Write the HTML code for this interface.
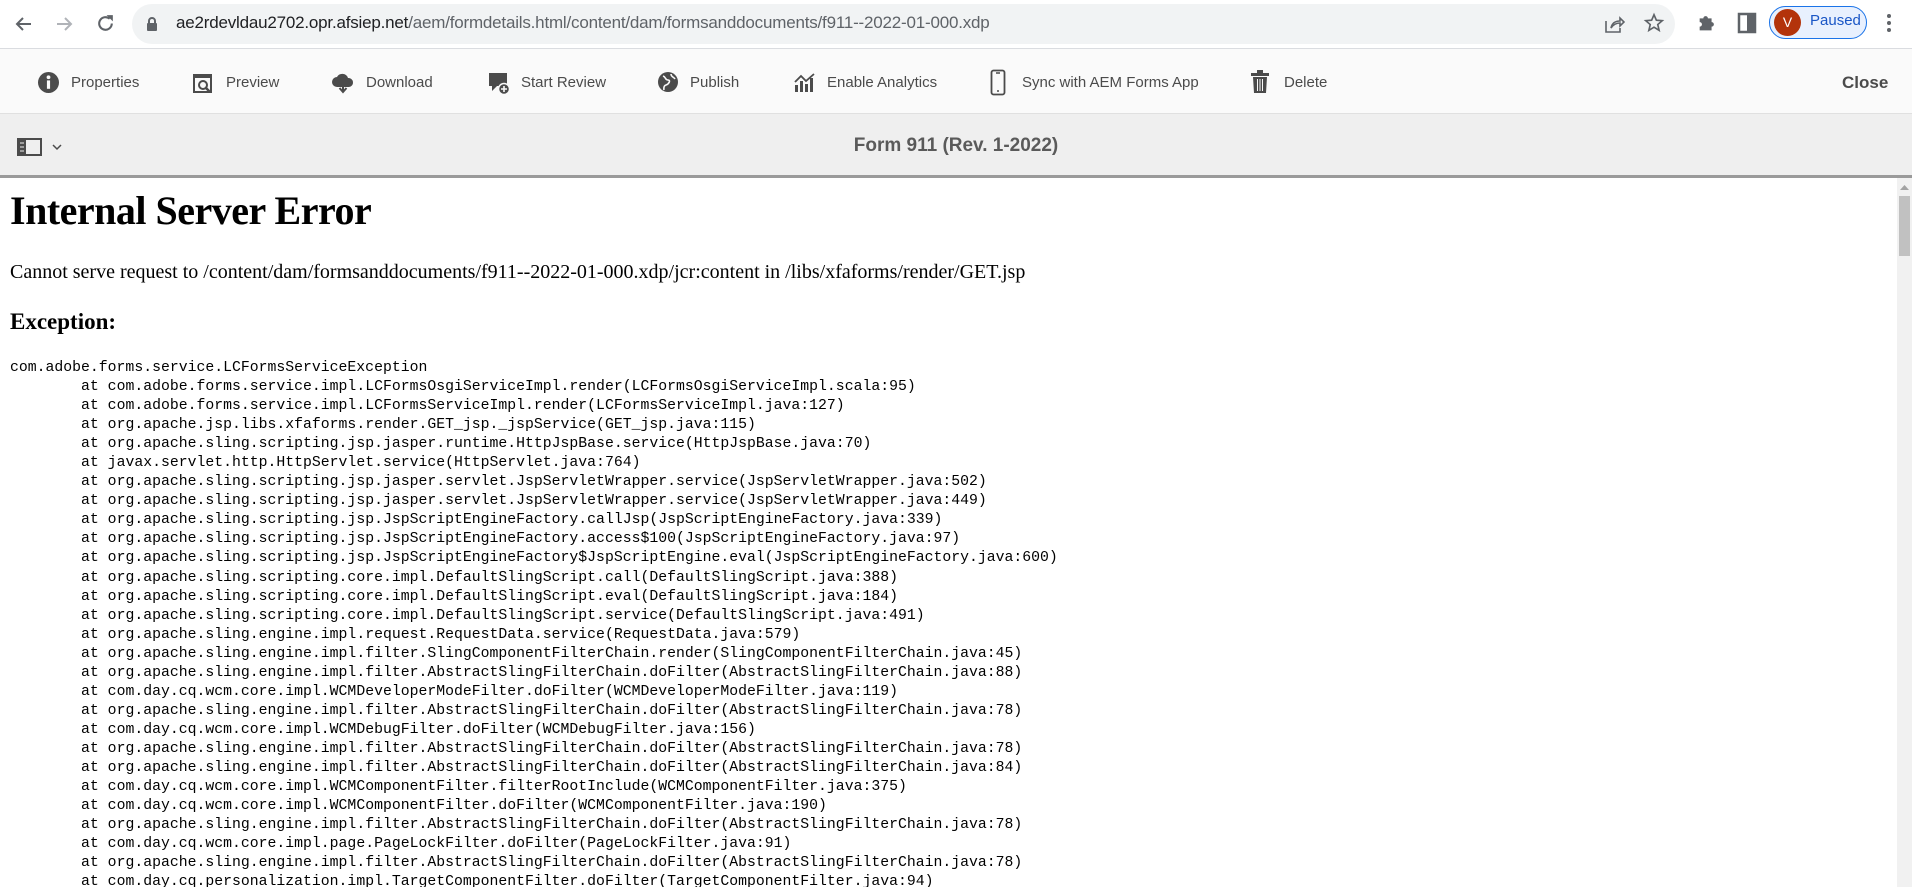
<!DOCTYPE html>
<html><head><meta charset="utf-8"><style>
*{margin:0;padding:0;box-sizing:border-box}
body{width:1912px;height:887px;overflow:hidden;background:#fff;position:relative;font-family:"Liberation Sans",sans-serif}
.chrome{position:absolute;left:0;top:0;width:1912px;height:49px;background:#fff;border-bottom:1px solid #dadce0}
.omni{position:absolute;left:132px;top:4px;width:1543px;height:40px;border-radius:20px;background:#f1f3f4}
.url{position:absolute;left:176px;top:13px;font-size:17px;color:#5f6368;white-space:nowrap;letter-spacing:-0.2px}
.url b{font-weight:normal;color:#202124}
.ico{position:absolute}
.abar{position:absolute;left:0;top:49px;width:1912px;height:65px;background:#fafafa;border-bottom:1px solid #e0e0e0}
.it{position:absolute;top:25px;font-size:15px;color:#4b4b4b;white-space:nowrap}
.tbar{position:absolute;left:0;top:114px;width:1912px;height:64px;background:#efefef;border-bottom:3px solid #9a9a9a}
.title{position:absolute;left:0;width:1912px;top:21px;text-align:center;font-size:19px;font-weight:bold;color:#5a5a5a}
.content{position:absolute;left:0;top:178px;width:1897px;height:709px;overflow:hidden;padding-left:10px;font-family:"Liberation Serif",serif;color:#000}
h1{font-size:40px;font-weight:bold;margin-top:10px;line-height:46px;letter-spacing:-0.5px}
p{font-size:20px;margin-top:26px;line-height:24px}
h3{font-size:23px;font-weight:bold;margin-top:24px;line-height:28px}
pre{font-family:"Liberation Mono",monospace;font-size:14.8px;line-height:19.05px;margin-top:23px;tab-size:8}
.sb{position:absolute;right:0;top:178px;width:15px;height:709px;background:#f1f1f1}
.thumb{position:absolute;right:2px;width:11px;height:60px;background:#c1c1c1}
</style></head><body>
<div class="chrome">
<svg class="ico" style="left:14px;top:14px" width="20" height="20" viewBox="0 0 20 20"><path d="M17 10H4M9 4L3 10l6 6" stroke="#5f6368" stroke-width="2" fill="none"/></svg>
<svg class="ico" style="left:54px;top:14px" width="20" height="20" viewBox="0 0 20 20"><path d="M3 10h13M11 4l6 6-6 6" stroke="#b0b3b8" stroke-width="2" fill="none"/></svg>
<svg class="ico" style="left:95px;top:13px" width="21" height="21" viewBox="0 0 20 20"><path d="M16 10a6 6 0 1 1-2-4.5" stroke="#5f6368" stroke-width="2" fill="none"/><path d="M11 2h6v6z" fill="#5f6368"/></svg>
<div class="omni"></div>
<svg class="ico" style="left:146px;top:16px" width="12" height="16" viewBox="0 0 12 16"><path d="M3 7V5a3 3 0 0 1 6 0v2" stroke="#5f6368" stroke-width="2" fill="none"/><rect x="1" y="7" width="10" height="8" rx="1" fill="#5f6368"/></svg>
<div class="url"><b>ae2rdevldau2702.opr.afsiep.net</b>/aem/formdetails.html/content/dam/formsanddocuments/f911--2022-01-000.xdp</div>
<svg class="ico" style="left:1603px;top:13px" width="22" height="22" viewBox="0 0 22 22"><path d="M3 8v11h14v-4M8 15c1-5 4-7 9-7V5l4 4-4 4v-3c-4 0-7 2-9 5z" stroke="#5f6368" stroke-width="1.6" fill="none"/></svg>
<svg class="ico" style="left:1643px;top:12px" width="22" height="22" viewBox="0 0 24 24"><path d="M12 3l2.6 6 6.4.5-4.9 4.2 1.5 6.3L12 16.6 6.4 20l1.5-6.3L3 9.5 9.4 9z" stroke="#5f6368" stroke-width="1.8" fill="none"/></svg>
<svg class="ico" style="left:1696px;top:12px" width="22" height="22" viewBox="0 0 24 24"><path d="M4 7h4a2.5 2.5 0 0 1 5 0h4v4a2.5 2.5 0 0 1 0 5v4H4v-4a2.5 2.5 0 0 0 0-5z" fill="#5f6368"/></svg>
<svg class="ico" style="left:1737px;top:12px" width="20" height="22" viewBox="0 0 20 22"><rect x="2" y="2" width="16" height="18" stroke="#5f6368" stroke-width="2.5" fill="none"/><rect x="10" y="2" width="8" height="18" fill="#5f6368"/></svg>
<div style="position:absolute;left:1769px;top:6px;width:98px;height:33px;border:1.5px solid #1a73e8;border-radius:17px;background:#e8f0fe"></div>
<div style="position:absolute;left:1774px;top:9px;width:27px;height:27px;border-radius:50%;background:#b3330b;color:#fff;font-size:14px;text-align:center;line-height:27px">V</div>
<div style="position:absolute;left:1810px;top:12px;font-size:15px;color:#1a56c6">Paused</div>
<svg class="ico" style="left:1885px;top:12px" width="8" height="22" viewBox="0 0 8 22"><circle cx="4" cy="4" r="2" fill="#5f6368"/><circle cx="4" cy="11" r="2" fill="#5f6368"/><circle cx="4" cy="18" r="2" fill="#5f6368"/></svg>
</div>

<div class="abar">
<svg class="ico" style="left:38px;top:23px" width="21" height="21" viewBox="0 0 20 20"><circle cx="10" cy="10" r="10" fill="#4b4b4b"/><rect x="8.5" y="8" width="3" height="8" fill="#fafafa"/><circle cx="10" cy="5" r="1.8" fill="#fafafa"/></svg>
<div class="it" style="left:71px">Properties</div>
<svg class="ico" style="left:192px;top:23px" width="22" height="22" viewBox="0 0 22 22"><rect x="2" y="3" width="17" height="17" stroke="#4b4b4b" stroke-width="2" fill="none"/><rect x="2" y="3" width="17" height="3" fill="#4b4b4b"/><circle cx="11" cy="13" r="4" stroke="#4b4b4b" stroke-width="2" fill="none"/><path d="M14 16l4 4" stroke="#4b4b4b" stroke-width="2.5"/></svg>
<div class="it" style="left:226px">Preview</div>
<svg class="ico" style="left:331px;top:21px" width="24" height="24" viewBox="0 0 24 24"><path d="M6 17a5 5 0 0 1 0-10 6 6 0 0 1 11 1 4.5 4.5 0 0 1 1 9z" fill="#4b4b4b"/><path d="M12 10v12M8.5 18l3.5 4 3.5-4" stroke="#4b4b4b" stroke-width="2" fill="none"/></svg>
<div class="it" style="left:366px">Download</div>
<svg class="ico" style="left:487px;top:22px" width="24" height="24" viewBox="0 0 24 24"><path d="M2 2h18v13H10l-5 5v-5H2z" fill="#4b4b4b"/><circle cx="17" cy="18" r="5.5" fill="#4b4b4b" stroke="#fafafa" stroke-width="1.5"/><path d="M17 15v6M14 18h6" stroke="#fafafa" stroke-width="1.6"/></svg>
<div class="it" style="left:521px">Start Review</div>
<svg class="ico" style="left:657px;top:22px" width="22" height="22" viewBox="0 0 22 22"><circle cx="11" cy="11" r="10" fill="#4b4b4b"/><path d="M6 5c3 1 2 4 5 4s1 4-2 5-2 5-2 5M14 3c0 3 3 3 4 5" stroke="#fafafa" stroke-width="1.6" fill="none"/></svg>
<div class="it" style="left:690px">Publish</div>
<svg class="ico" style="left:793px;top:23px" width="24" height="22" viewBox="0 0 24 22"><path d="M2 20V13h3v7zM7 20V9h3v11zM12 20v-8h3v8zM17 20V6h3v14z" fill="#4b4b4b"/><path d="M2 10l6-6 5 5 8-7" stroke="#4b4b4b" stroke-width="1.8" fill="none"/></svg>
<div class="it" style="left:827px">Enable Analytics</div>
<svg class="ico" style="left:990px;top:20px" width="16" height="27" viewBox="0 0 16 27"><rect x="1.5" y="1.5" width="13" height="24" rx="2" stroke="#4b4b4b" stroke-width="1.8" fill="none"/><path d="M6 4h4M7 22h2" stroke="#4b4b4b" stroke-width="1.5"/></svg>
<div class="it" style="left:1022px">Sync with AEM Forms App</div>
<svg class="ico" style="left:1250px;top:21px" width="20" height="24" viewBox="0 0 20 24"><rect x="1" y="3" width="18" height="3" fill="#4b4b4b"/><rect x="7" y="0" width="6" height="3" fill="#4b4b4b"/><path d="M3 7h14l-1 16H4z" fill="#4b4b4b"/><path d="M7.5 9v12M10 9v12M12.5 9v12" stroke="#fafafa" stroke-width="1"/></svg>
<div class="it" style="left:1284px">Delete</div>
<div class="it" style="left:1842px;font-weight:bold;font-size:17px;top:24px;color:#4b4b4b">Close</div>
</div>

<div class="tbar">
<svg class="ico" style="left:17px;top:24px" width="25" height="18" viewBox="0 0 25 18"><rect x="1" y="1" width="23" height="16" stroke="#4b4b4b" stroke-width="2" fill="none"/><rect x="1" y="1" width="8" height="16" fill="#4b4b4b"/><path d="M3 5h4M3 9h4M3 13h4" stroke="#efefef" stroke-width="1"/></svg>
<svg class="ico" style="left:52px;top:29px" width="10" height="8" viewBox="0 0 10 8"><path d="M1 2l4 4 4-4" stroke="#4b4b4b" stroke-width="1.5" fill="none"/></svg>
<div class="title">Form 911 (Rev. 1-2022)</div>
</div>

<div class="content">
<h1>Internal Server Error</h1>
<p>Cannot serve request to /content/dam/formsanddocuments/f911--2022-01-000.xdp/jcr:content in /libs/xfaforms/render/GET.jsp</p>
<h3>Exception:</h3>
<pre>com.adobe.forms.service.LCFormsServiceException
	at com.adobe.forms.service.impl.LCFormsOsgiServiceImpl.render(LCFormsOsgiServiceImpl.scala:95)
	at com.adobe.forms.service.impl.LCFormsServiceImpl.render(LCFormsServiceImpl.java:127)
	at org.apache.jsp.libs.xfaforms.render.GET_jsp._jspService(GET_jsp.java:115)
	at org.apache.sling.scripting.jsp.jasper.runtime.HttpJspBase.service(HttpJspBase.java:70)
	at javax.servlet.http.HttpServlet.service(HttpServlet.java:764)
	at org.apache.sling.scripting.jsp.jasper.servlet.JspServletWrapper.service(JspServletWrapper.java:502)
	at org.apache.sling.scripting.jsp.jasper.servlet.JspServletWrapper.service(JspServletWrapper.java:449)
	at org.apache.sling.scripting.jsp.JspScriptEngineFactory.callJsp(JspScriptEngineFactory.java:339)
	at org.apache.sling.scripting.jsp.JspScriptEngineFactory.access$100(JspScriptEngineFactory.java:97)
	at org.apache.sling.scripting.jsp.JspScriptEngineFactory$JspScriptEngine.eval(JspScriptEngineFactory.java:600)
	at org.apache.sling.scripting.core.impl.DefaultSlingScript.call(DefaultSlingScript.java:388)
	at org.apache.sling.scripting.core.impl.DefaultSlingScript.eval(DefaultSlingScript.java:184)
	at org.apache.sling.scripting.core.impl.DefaultSlingScript.service(DefaultSlingScript.java:491)
	at org.apache.sling.engine.impl.request.RequestData.service(RequestData.java:579)
	at org.apache.sling.engine.impl.filter.SlingComponentFilterChain.render(SlingComponentFilterChain.java:45)
	at org.apache.sling.engine.impl.filter.AbstractSlingFilterChain.doFilter(AbstractSlingFilterChain.java:88)
	at com.day.cq.wcm.core.impl.WCMDeveloperModeFilter.doFilter(WCMDeveloperModeFilter.java:119)
	at org.apache.sling.engine.impl.filter.AbstractSlingFilterChain.doFilter(AbstractSlingFilterChain.java:78)
	at com.day.cq.wcm.core.impl.WCMDebugFilter.doFilter(WCMDebugFilter.java:156)
	at org.apache.sling.engine.impl.filter.AbstractSlingFilterChain.doFilter(AbstractSlingFilterChain.java:78)
	at org.apache.sling.engine.impl.filter.AbstractSlingFilterChain.doFilter(AbstractSlingFilterChain.java:84)
	at com.day.cq.wcm.core.impl.WCMComponentFilter.filterRootInclude(WCMComponentFilter.java:375)
	at com.day.cq.wcm.core.impl.WCMComponentFilter.doFilter(WCMComponentFilter.java:190)
	at org.apache.sling.engine.impl.filter.AbstractSlingFilterChain.doFilter(AbstractSlingFilterChain.java:78)
	at com.day.cq.wcm.core.impl.page.PageLockFilter.doFilter(PageLockFilter.java:91)
	at org.apache.sling.engine.impl.filter.AbstractSlingFilterChain.doFilter(AbstractSlingFilterChain.java:78)
	at com.day.cq.personalization.impl.TargetComponentFilter.doFilter(TargetComponentFilter.java:94)
	at org.apache.sling.engine.impl.filter.AbstractSlingFilterChain.doFilter(AbstractSlingFilterChain.java:78)
</pre>
</div>
<div class="sb"><svg style="position:absolute;left:3px;top:6px" width="9" height="6" viewBox="0 0 9 6"><path d="M0 6l4.5-5 4.5 5z" fill="#a3a3a3"/></svg><div class="thumb" style="top:18px"></div></div>
</body></html>
